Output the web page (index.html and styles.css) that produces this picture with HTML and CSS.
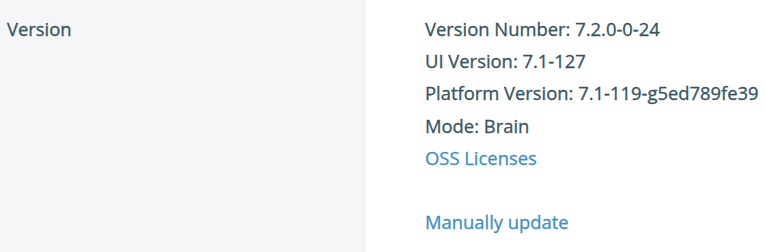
FILE: index.html
```html
<!DOCTYPE html>
<html lang="en">
<head>
  <meta charset="UTF-8">
  <title>Version</title>
  <link rel="stylesheet" href="styles.css">
</head>
<body>
  <div class="row">
    <div class="label">Version</div>
    <div class="value">
      <p>Version Number: 7.2.0-0-24</p>
      <p>UI Version: 7.1-127</p>
      <p>Platform Version: 7.1-119-g5ed789fe39</p>
      <p>Mode: Brain</p>
      <p><a href="#">OSS Licenses</a></p>
      <p class="gap"><a href="#">Manually update</a></p>
    </div>
  </div>
</body>
</html>
```

FILE: styles.css
```css
body {
  margin: 0;
  font-family: "Open Sans", "Noto Sans", sans-serif;
  font-size: 18.4px;
  color: #36555f;
  -webkit-text-stroke: 0.3px currentColor;
  background: #fff;
}
.row {
  display: flex;
  height: 252px;
}
.label {
  width: 359px;
  padding: 13px 0 0 7px;
  background: #f4f6f8;
  line-height: 32px;
}
.value {
  flex: 1;
  padding: 13px 0 0 59px;
  line-height: 32.2px;
}
.value p {
  margin: 0;
}
.value .gap {
  margin-top: 32.2px;
}
.value a {
  color: #3f8fc6;
  text-decoration: none;
}
```
